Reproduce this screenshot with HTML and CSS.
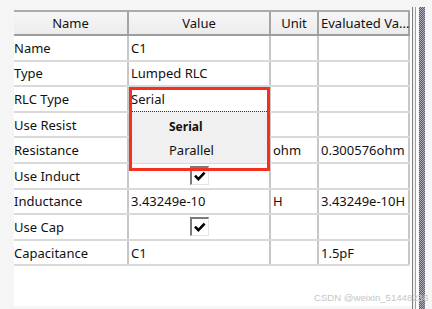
FILE: index.html
```html
<!DOCTYPE html>
<html>
<head>
<meta charset="utf-8">
<link rel="stylesheet" href="styles.css">
</head>
<body>
<div class="pane">
  <div class="table">
    <div class="thead">
      <div class="th">Name</div>
      <div class="th">Value</div>
      <div class="th">Unit</div>
      <div class="th th-left">Evaluated Va...</div>
    </div>
    <div class="row"><div class="td td-name">Name</div><div class="td">C1</div><div class="td"></div><div class="td"></div></div>
    <div class="row"><div class="td td-name">Type</div><div class="td">Lumped RLC</div><div class="td"></div><div class="td"></div></div>
    <div class="row"><div class="td td-name">RLC Type</div><div class="td">Serial</div><div class="td"></div><div class="td"></div></div>
    <div class="row"><div class="td td-name">Use Resist</div><div class="td"></div><div class="td"></div><div class="td"></div></div>
    <div class="row"><div class="td td-name">Resistance</div><div class="td"></div><div class="td">ohm</div><div class="td">0.300576ohm</div></div>
    <div class="row"><div class="td td-name">Use Induct</div><div class="td td-check"><span class="checkbox"><svg viewBox="0 0 16 16" width="16" height="16"><path d="M3 7.6 L6.4 11.2 L12.6 4.6" fill="none" stroke="#000" stroke-width="2.6"/></svg></span></div><div class="td"></div><div class="td"></div></div>
    <div class="row"><div class="td td-name">Inductance</div><div class="td">3.43249e-10</div><div class="td">H</div><div class="td">3.43249e-10H</div></div>
    <div class="row"><div class="td td-name">Use Cap</div><div class="td td-check"><span class="checkbox"><svg viewBox="0 0 16 16" width="16" height="16"><path d="M3 7.6 L6.4 11.2 L12.6 4.6" fill="none" stroke="#000" stroke-width="2.6"/></svg></span></div><div class="td"></div><div class="td"></div></div>
    <div class="row"><div class="td td-name">Capacitance</div><div class="td">C1</div><div class="td"></div><div class="td">1.5pF</div></div>

    <div class="popup">
      <div class="opt opt-sel">Serial</div>
      <div class="opt">Parallel</div>
    </div>
    <div class="callout"></div>
  </div>
  <div class="scrollbar">
    <span class="sb-line dark"></span>
    <span class="sb-gap"></span>
    <span class="sb-line mid"></span>
    <span class="sb-gap wide"></span>
    <span class="sb-thumb"></span>
  </div>
</div>
<div class="watermark">CSDN @weixin_51448236</div>
</body>
</html>
```
FILE: styles.css
```css
html, body {
  margin: 0;
  padding: 0;
}
body {
  width: 432px;
  height: 309px;
  overflow: hidden;
  background: #f5f5f5;
  font-family: "Noto Sans", "Open Sans", sans-serif;
  font-size: 13px;
  color: #111;
  position: relative;
}
.pane {
  display: flex;
  box-sizing: border-box;
  height: 309px;
  padding: 7px 0 0 14px;
}
.table {
  position: relative;
  width: 398px;
  margin-top: 3px;
  height: 296px;
  background: #fff;
}
.thead {
  display: grid;
  grid-template-columns: 115px 142px 48px 91px;
  width: 396px;
  height: 26px;
  box-sizing: border-box;
  border-top: 2px solid #ababab;
  border-bottom: 2px solid #9d9d9d;
  background: linear-gradient(#f6f6f6, #ececec);
}
.th {
  display: flex;
  align-items: center;
  justify-content: center;
  border-right: 2px solid #a4a4a4;
  white-space: nowrap;
  overflow: hidden;
}
.th-left {
  justify-content: flex-start;
  padding-left: 2px;
  overflow: visible;
}
.row {
  display: grid;
  grid-template-columns: 115px 142px 48px 91px;
  width: 396px;
  height: 25.6px;
  box-sizing: border-box;
  border-bottom: 2px solid #d9d9d9;
}
.td {
  display: flex;
  align-items: center;
  padding-left: 2px;
  border-right: 2px solid #c6c6c6;
  white-space: nowrap;
  overflow: hidden;
}
.td-name {
  padding-left: 0;
}
.td-check {
  justify-content: center;
  padding-left: 0;
}
.checkbox {
  display: block;
  width: 16px;
  height: 16px;
  border-top: 2px solid #7a7a7a;
  border-left: 2px solid #7a7a7a;
  border-right: 1px solid #e4e4e4;
  border-bottom: 1px solid #e4e4e4;
  background: #fff;
}
.checkbox svg {
  display: block;
}
.popup {
  position: absolute;
  left: 118px;
  top: 101px;
  width: 135px;
  height: 52px;
  box-sizing: border-box;
  border-top: 1px dotted #333;
  background: #f0f0f0;
  padding-top: 3px;
}
.opt {
  height: 23px;
  display: flex;
  align-items: center;
  padding-left: 37px;
}
.opt-sel {
  font-weight: bold;
  font-size: 12px;
}
.callout {
  position: absolute;
  left: 115px;
  top: 77px;
  width: 141px;
  height: 84px;
  box-sizing: border-box;
  border: 3px solid #f5301f;
}
.scrollbar {
  display: flex;
  height: 302px;
}
.sb-line {
  width: 1px;
}
.sb-line.dark { background: #7c7c7c; }
.sb-line.mid { background: #a0a0a0; }
.sb-gap {
  width: 1.5px;
  background: #f2f2f2;
}
.sb-gap.wide {
  width: 3px;
  background: #fbfbfb;
}
.sb-thumb {
  width: 6px;
  background: repeating-conic-gradient(#5e6070 0 25%, #a8a9b4 0 50%) 0 0 / 2px 2px;
}
.watermark {
  position: absolute;
  left: 314px;
  top: 293px;
  font-family: "Liberation Sans", Arial, sans-serif;
  font-size: 9.6px;
  line-height: 1;
  color: #c6c6c6;
  white-space: nowrap;
}
```
